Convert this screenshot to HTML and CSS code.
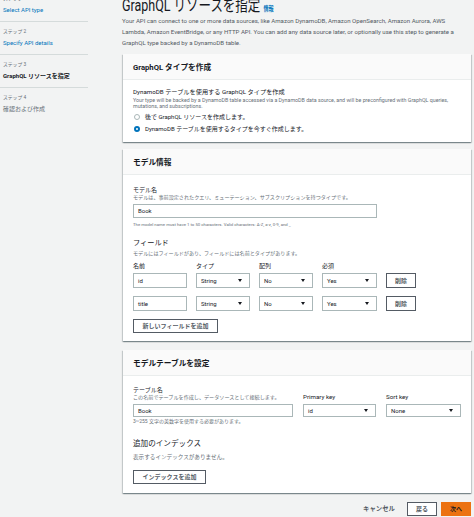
FILE: index.html
```html
<!DOCTYPE html>
<html lang="ja">
<head>
<meta charset="utf-8">
<title>GraphQL リソースを指定</title>
<link rel="stylesheet" href="styles.css">
</head>
<body>
<div class="page">
  <nav class="steps">
    <div class="step">
      <div class="step-label">ステップ 1</div>
      <a class="step-link">Select API type</a>
    </div>
    <div class="step">
      <div class="step-label">ステップ 2</div>
      <a class="step-link">Specify API details</a>
    </div>
    <div class="step">
      <div class="step-label">ステップ 3</div>
      <div class="step-current">GraphQL リソースを指定</div>
    </div>
    <div class="step step-last">
      <div class="step-label">ステップ 4</div>
      <div class="step-disabled">確認および作成</div>
    </div>
  </nav>

  <main class="main">
    <h1 class="title">GraphQL リソースを指定 <span class="info">情報</span></h1>
    <p class="desc">Your API can connect to one or more data sources, like Amazon DynamoDB, Amazon OpenSearch, Amazon Aurora, AWS<br>Lambda, Amazon EventBridge, or any HTTP API. You can add any data source later, or optionally use this step to generate a<br>GraphQL type backed by a DynamoDB table.</p>

    <section class="card card-type">
      <div class="card-header">GraphQL タイプを作成</div>
      <div class="card-body body-type">
        <div class="field-title">DynamoDB テーブルを使用する GraphQL タイプを作成</div>
        <div class="field-desc">Your type will be backed by a DynamoDB table accessed via a DynamoDB data source, and will be preconfigured with GraphQL queries,<br>mutations, and subscriptions.</div>
        <div class="radios">
          <div class="radio-row"><span class="radio"></span><span>後で GraphQL リソースを作成します。</span></div>
          <div class="radio-row"><span class="radio radio-on"></span><span>DynamoDB テーブルを使用するタイプを今すぐ作成します。</span></div>
        </div>
      </div>
    </section>

    <section class="card card-model">
      <div class="card-header">モデル情報</div>
      <div class="card-body body-model">
        <div class="label">モデル名</div>
        <div class="help">モデルは、事前設定されたクエリ、ミューテーション、サブスクリプションを持つタイプです。</div>
        <div class="input input-model">Book</div>
        <div class="constraint">The model name must have 1 to 50 characters. Valid characters: A-Z, a-z, 0-9, and _</div>

        <div class="subhead subhead-fields">フィールド</div>
        <div class="help help-fields">モデルにはフィールドがあり、フィールドには名前とタイプがあります。</div>
        <div class="fields">
          <div class="col-label">名前</div>
          <div class="col-label">タイプ</div>
          <div class="col-label">配列</div>
          <div class="col-label">必須</div>
          <div></div>

          <div class="input input-row row-first">id</div>
          <div class="select input-row row-first">String</div>
          <div class="select input-row row-first">No</div>
          <div class="select input-row row-first">Yes</div>
          <div class="btn btn-row row-first">削除</div>

          <div class="input input-row">title</div>
          <div class="select input-row">String</div>
          <div class="select input-row">No</div>
          <div class="select input-row">Yes</div>
          <div class="btn btn-row">削除</div>
        </div>
        <div class="btn btn-add">新しいフィールドを追加</div>
      </div>
    </section>

    <section class="card card-table">
      <div class="card-header">モデルテーブルを設定</div>
      <div class="card-body body-table">
        <div class="table-grid">
          <div class="table-name-head">
            <div class="label">テーブル名</div>
            <div class="help">この名前でテーブルを作成し、データソースとして接続します。</div>
          </div>
          <div class="key-label">Primary key</div>
          <div class="key-label">Sort key</div>
          <div class="input input-table">Book</div>
          <div class="select input-table">id</div>
          <div class="select input-table">None</div>
          <div class="table-help">3~255 文字の英数字を使用する必要があります。</div>
        </div>

        <div class="subhead subhead-index">追加のインデックス</div>
        <div class="help help-index">表示するインデックスがありません。</div>
        <div class="btn btn-index">インデックスを追加</div>
      </div>
    </section>

    <div class="footer">
      <span class="cancel">キャンセル</span>
      <span class="btn btn-footer">戻る</span>
      <span class="btn btn-footer btn-primary">次へ</span>
    </div>
  </main>
</div>
</body>
</html>
```

FILE: styles.css
```css
* {
  box-sizing: border-box;
}

html, body {
  margin: 0;
  padding: 0;
  background: #f2f3f3;
  overflow: hidden;
}

body {
  font-family: Roboto, "Noto Sans CJK JP", sans-serif;
  color: #16191f;
  width: 474px;
  height: 517px;
}

.page {
  display: flex;
  align-items: flex-start;
}

/* ---------- side navigation ---------- */
.steps {
  width: 88px;
  flex: none;
  margin-top: -11px;
}

.step {
  padding: 5px 0 6px 3px;
  border-bottom: 1px solid #d5dbdb;
}

.step-last {
  border-bottom: none;
}

.step-label {
  font-size: 4.8px;
  line-height: 10px;
  color: #687078;
}

.step-link,
.step-current,
.step-disabled {
  display: block;
  font-size: 6px;
  line-height: 11px;
  white-space: nowrap;
}

.step-link {
  color: #0073bb;
}

.step-current {
  font-weight: 700;
  color: #16191f;
}

.step-disabled {
  color: #687078;
}

/* ---------- main ---------- */
.main {
  flex: 1;
  margin-left: 34px;
  padding-right: 5px;
}

.title {
  margin: -2px 0 0 0;
  height: 16.5px;
  font-size: 16px;
  line-height: 15px;
  font-weight: 400;
  color: #16191f;
  white-space: nowrap;
  transform: scaleX(0.78);
  transform-origin: 0 50%;
}

.info {
  font-size: 6.5px;
  font-weight: 700;
  color: #0073bb;
  vertical-align: baseline;
}

.desc {
  margin: 0;
  font-size: 6.1px;
  line-height: 11px;
  color: #545b64;
  white-space: nowrap;
}

.card {
  background: #fff;
  box-shadow: 0 1px 1px 0 rgba(0, 28, 36, 0.3), 1px 1px 1px 0 rgba(0, 28, 36, 0.15), -1px 1px 1px 0 rgba(0, 28, 36, 0.15);
  margin-left: 1px;
}

.card-type {
  margin-top: 6px;
}

.card-model {
  margin-top: 7px;
}

.card-table {
  margin-top: 9px;
}

.card-header {
  height: 26px;
  padding: 0 10px;
  display: flex;
  align-items: center;
  background: #fafafa;
  border-bottom: 1px solid #eaeded;
  font-size: 7.7px;
  font-weight: 700;
  color: #16191f;
}

.card-body {
  padding: 0 10px;
}

/* card 1 */
.body-type {
  padding-top: 8px;
  padding-bottom: 7px;
}

.field-title {
  font-size: 6.2px;
  line-height: 9px;
  white-space: nowrap;
}

.field-desc {
  font-size: 5.3px;
  line-height: 6px;
  color: #687078;
  white-space: nowrap;
}

.radios {
  margin-top: 2px;
}

.radio-row {
  display: flex;
  align-items: center;
  gap: 5px;
  height: 12px;
  font-size: 6px;
  padding-left: 1px;
  white-space: nowrap;
}

.radio {
  width: 6px;
  height: 6px;
  border-radius: 50%;
  border: 1px solid #aab7b8;
  background: #fff;
  flex: none;
}

.radio-on {
  border: 2px solid #0073bb;
}

/* shared form bits */
.label {
  font-size: 6px;
  line-height: 9px;
  color: #16191f;
}

.help {
  font-size: 5.1px;
  line-height: 7px;
  color: #687078;
  white-space: nowrap;
}

.input,
.select {
  position: relative;
  background: #fff;
  border: 1px solid #aab7b8;
  font-size: 6px;
  color: #16191f;
  padding-left: 4px;
  display: flex;
  align-items: center;
}

.select::after {
  content: "";
  position: absolute;
  right: 7px;
  top: 50%;
  margin-top: -1px;
  border-left: 2px solid transparent;
  border-right: 2px solid transparent;
  border-top: 3px solid #16191f;
}

.btn {
  display: flex;
  align-items: center;
  justify-content: center;
  background: #fff;
  border: 1px solid #545b64;
  color: #545b64;
  font-size: 6px;
  font-weight: 700;
  white-space: nowrap;
}

/* card 2 */
.body-model {
  padding-top: 10px;
  padding-bottom: 8px;
}

.input-model {
  width: 244px;
  height: 14px;
  margin-top: 3px;
}

.constraint {
  margin-top: 3px;
  font-size: 4.3px;
  line-height: 7px;
  color: #687078;
  white-space: nowrap;
}

.subhead {
  font-size: 7.2px;
  line-height: 10px;
  color: #16191f;
}

.subhead-fields {
  margin-top: 10px;
}

.help-fields {
  margin-top: 2px;
}

.fields {
  display: grid;
  grid-template-columns: 54px 54px 54px 55px 30px;
  column-gap: 9px;
  margin-top: 5px;
}

.col-label {
  font-size: 6px;
  line-height: 8px;
}

.input-row {
  height: 15px;
  margin-top: 8px;
}

.row-first {
  margin-top: 3px;
}

.btn-row {
  height: 15px;
  margin-top: 8px;
}

.btn-row.row-first {
  margin-top: 3px;
}

.btn-add {
  width: 85px;
  height: 14px;
  margin-top: 8px;
}

/* card 3 */
.body-table {
  padding-top: 9px;
  padding-bottom: 9px;
}

.table-grid {
  display: grid;
  grid-template-columns: 160px 73px 75px;
  column-gap: 10px;
  align-items: end;
}

.key-label {
  font-size: 6.2px;
  line-height: 7px;
  color: #16191f;
}

.input-table {
  height: 13px;
  margin-top: 3px;
}

.table-help {
  margin-top: 1px;
  font-size: 5px;
  line-height: 7px;
  color: #687078;
  white-space: nowrap;
}

.subhead-index {
  margin-top: 14px;
  font-size: 7.6px;
}

.help-index {
  margin-top: 4px;
  font-size: 5.6px;
  line-height: 8px;
}

.btn-index {
  width: 73px;
  height: 14px;
  margin-top: 9px;
}

/* footer */
.footer {
  display: flex;
  justify-content: flex-end;
  align-items: center;
  margin-top: 9px;
  gap: 4px;
}

.cancel {
  font-size: 6.4px;
  font-weight: 700;
  color: #545b64;
  margin-right: 8px;
}

.btn-footer {
  width: 30px;
  height: 14px;
}

.btn-primary {
  background: #ec7211;
  border-color: #ec7211;
  color: #16191f;
}
```
